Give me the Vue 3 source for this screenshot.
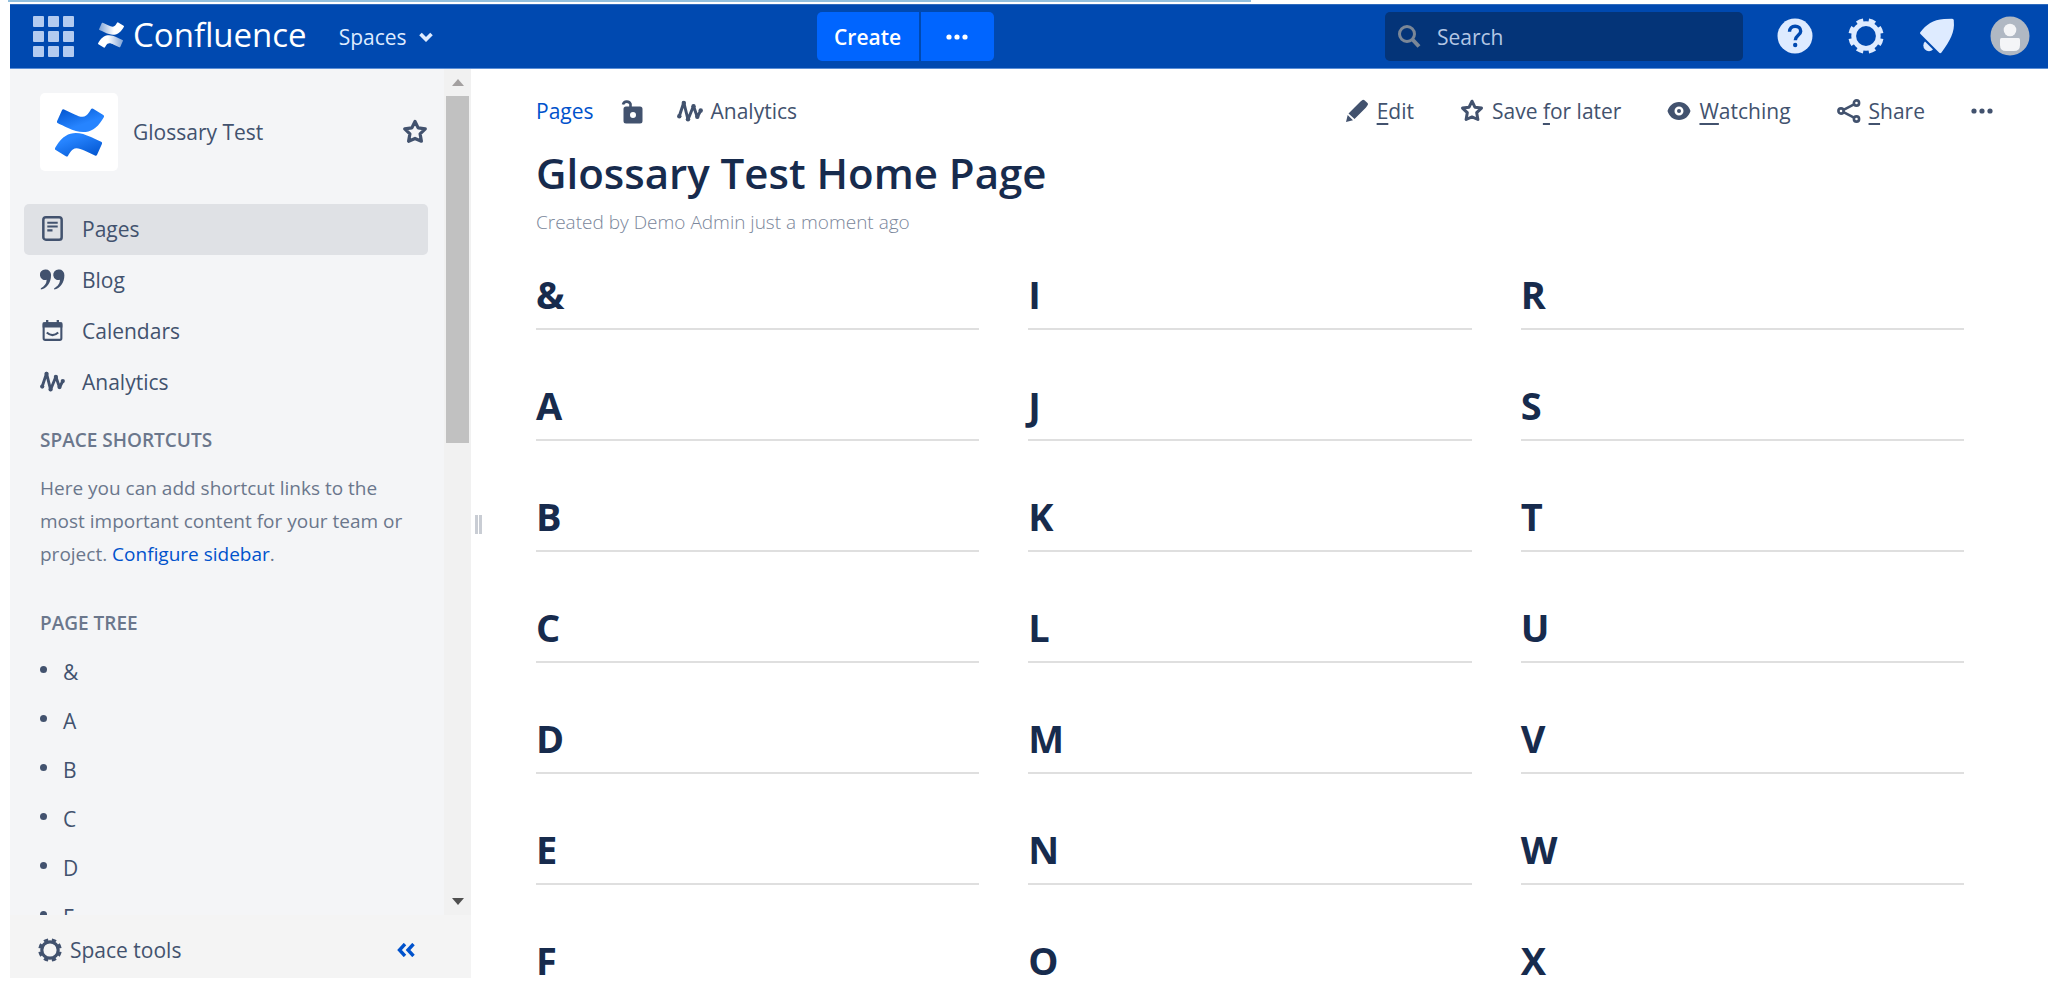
<script setup>
import { ref } from "vue";
const query = ref("");
const pages = ["&", "A", "B", "C", "D", "E"];
const columns = [
  ["&", "A", "B", "C", "D", "E", "F"],
  ["I", "J", "K", "L", "M", "N", "O"],
  ["R", "S", "T", "U", "V", "W", "X"],
];
const links = [
  { name: "Pages", icon: "pages" },
  { name: "Blog", icon: "blog" },
  { name: "Calendars", icon: "calendar" },
  { name: "Analytics", icon: "analytics" },
];
const active = ref("Pages");
</script>

<template>
  <svg class="sprite" aria-hidden="true">
    <symbol id="gear" viewBox="0 0 24 24">
      <g fill="none" stroke="currentColor">
        <circle cx="12" cy="12" r="8.2" stroke-width="3.2" />
        <circle
          cx="12"
          cy="12"
          r="10.3"
          stroke-width="3"
          pathLength="80"
          stroke-dasharray="5.4 4.6"
          stroke-dashoffset="-2.3"
        />
      </g>
    </symbol>
    <symbol id="star" viewBox="0 0 24 24">
      <path
        d="M12 2.2l2.9 6 6.6.9-4.8 4.6 1.2 6.8-5.9-2.6-5.900 2.600 1.200-6.800L2.500 9.100l6.600-.9z"
        fill="none"
        stroke="currentColor"
        stroke-width="3"
        stroke-linejoin="round"
      />
    </symbol>
    <symbol id="analytics" viewBox="0 0 26 22">
      <path
        d="M2.2 16.5L6.8 2.5 11 19.5 16.5 6 20.3 17 23.8 10.5"
        fill="none"
        stroke="currentColor"
        stroke-width="3"
        stroke-linejoin="round"
      />
      <g fill="currentColor">
        <circle cx="2.3" cy="16.3" r="2.2" />
        <circle cx="6.8" cy="3" r="2.2" />
        <circle cx="11" cy="19.3" r="2.2" />
        <circle cx="16.5" cy="6.2" r="2.2" />
        <circle cx="20.3" cy="16.8" r="2.2" />
        <circle cx="23.7" cy="10.5" r="2.2" />
      </g>
    </symbol>
    <symbol id="pages" viewBox="0 0 24 24">
      <rect x="3.2" y="1.2" width="17.6" height="21.6" rx="2.5" fill="none" stroke="currentColor" stroke-width="2.4" />
      <path d="M7 6.5h10M7 10h10M7 13.8h5" stroke="currentColor" stroke-width="2" />
    </symbol>
    <symbol id="blog" viewBox="0 0 24 24">
      <path
        d="M5 2.5a5 5 0 0 1 5.6 5.3C10.6 15 6.5 20.3.8 21.7V20.5C4.2 18.6 6.5 15.7 6.3 12.3A5 5 0 1 1 5 2.5z"
        fill="currentColor"
      />
      <path
        d="M17.8 2.5a5 5 0 0 1 5.6 5.3C23.4 15 19.3 20.3 13.6 21.7V20.5C17 18.6 19.3 15.7 19.1 12.3A5 5 0 1 1 17.8 2.5z"
        fill="currentColor"
      />
    </symbol>
    <symbol id="calendar" viewBox="0 0 24 24">
      <rect x="3.5" y="5" width="17" height="16" rx="1.5" fill="none" stroke="currentColor" stroke-width="2" />
      <path d="M2.5 5q0-1 1-1h17q1 0 1 1v4h-19zM5.8 2h2.2v3H5.8zM16 2h2.2v3H16z" fill="currentColor" />
      <path d="M6.500 14q5.500 5 11 0" fill="none" stroke="currentColor" stroke-width="2" />
    </symbol>
    <symbol id="confluence" viewBox="0 0 24 24">
      <path
        class="upper"
        d="M23.131 5.743c.249-.405.531-.875.764-1.25a.764.764 0 0 0-.256-1.034L18.675.404a.764.764 0 0 0-1.058.26c-.195.335-.451.763-.734 1.225-1.966 3.246-3.945 2.85-7.508 1.146L4.437.694a.764.764 0 0 0-1.027.382L1.046 6.422a.764.764 0 0 0 .382 1c1.039.49 3.105 1.467 4.965 2.361 6.698 3.246 12.392 3.029 16.738-4.04z"
      />
      <path
        class="lower"
        d="M.87 18.257c-.248.382-.53.875-.763 1.245a.764.764 0 0 0 .255 1.04l4.965 3.054a.764.764 0 0 0 1.058-.26c.199-.332.454-.763.733-1.221 1.967-3.247 3.945-2.853 7.508-1.146l4.957 2.337a.764.764 0 0 0 1.028-.382l2.364-5.346a.764.764 0 0 0-.382-1 599.851 599.851 0 0 1-4.965-2.361C10.911 10.97 5.224 11.185.87 18.257z"
      />
    </symbol>
    <symbol id="dots" viewBox="0 0 22 6">
      <g fill="currentColor">
        <circle cx="3" cy="3" r="2.6" />
        <circle cx="11" cy="3" r="2.6" />
        <circle cx="19" cy="3" r="2.6" />
      </g>
    </symbol>
  </svg>

  <div class="app">
    <div class="progress"></div>
    <header>
      <button class="plain switcher" aria-label="Applications">
        <span v-for="n in 9" :key="n"></span>
      </button>
      <a href="#" class="brand">
        <svg width="26" height="26" viewBox="0 0 24 24">
          <defs>
            <linearGradient id="white-up">
              <stop offset="0" stop-color="#fff" stop-opacity=".5" />
              <stop offset=".6" stop-color="#fff" />
            </linearGradient>
            <linearGradient id="white-down">
              <stop offset=".4" stop-color="#fff" />
              <stop offset="1" stop-color="#fff" stop-opacity=".5" />
            </linearGradient>
          </defs>
          <use href="#confluence" class="logo-white" />
        </svg>
        Confluence
      </a>
      <button class="plain spaces">
        Spaces
        <svg width="14" height="10" viewBox="0 0 14 10">
          <path d="M1.5 2l5.500 5.500L12.500 2" fill="none" stroke="currentColor" stroke-width="3.6" />
        </svg>
      </button>
      <div class="create">
        <button>Create</button>
        <button aria-label="Create from template">
          <svg width="22" height="6"><use href="#dots" /></svg>
        </button>
      </div>
      <label class="search">
        <svg width="24" height="24" viewBox="0 0 24 24">
          <g fill="none" stroke="#7b8797" stroke-width="3">
            <circle cx="10" cy="9" r="7.5" />
            <path d="M15 14l7 7.500" stroke-width="4" />
          </g>
        </svg>
        <input v-model="query" type="text" placeholder="Search" aria-label="Search" />
      </label>
      <button class="plain tool" aria-label="Help">
        <svg width="36" height="36" viewBox="0 0 36 36">
          <circle cx="18" cy="18" r="17.5" fill="#deebff" />
          <path
            d="M12.5 13.800c0-3.500 2.300-5.600 5.600-5.600s5.600 2 5.600 5c0 4-5.400 4.300-5.400 9"
            fill="none"
            stroke="#0049b0"
            stroke-width="3.4"
          />
          <circle cx="18.200" cy="27" r="2.200" fill="#0049b0" />
        </svg>
      </button>
      <button class="plain tool" aria-label="Settings">
        <svg width="36" height="36"><use href="#gear" /></svg>
      </button>
      <button class="plain tool" aria-label="Notifications">
        <svg width="36" height="36" viewBox="0 0 36 36">
          <path
            d="M1.500 14C7 7 14 1.500 25 1L33 .8c1.500 0 2 1 1.800 2.500C36 14 31 23 22.500 34.500c-.8 1-1.800 1-2.500 0L1.500 16c-.6-.6-.6-1.300 0-2z"
            fill="#deebff"
          />
          <path d="M6 23.500l8 8A5 5 0 0 1 6 23.500z" fill="#deebff" />
        </svg>
      </button>
      <button class="plain tool" aria-label="Profile">
        <svg width="40" height="40" viewBox="0 0 40 40">
          <circle cx="20" cy="20" r="19.500" fill="#b0b8c3" />
          <circle cx="20" cy="14" r="6.300" fill="#f4f5f7" />
          <path d="M10 23.500a1.500 1.500 0 0 1 1.500-1.500h17a1.500 1.500 0 0 1 1.500 1.500V29q0 6-6 6h-8q-6 0-6-6z" fill="#f4f5f7" />
        </svg>
      </button>
    </header>

    <div class="body">
      <aside>
        <div class="scroller">
          <div class="panel">
            <div class="space">
              <a href="#" class="space-logo" aria-label="Space home">
                <svg width="49" height="49" viewBox="0 0 24 24">
                  <defs>
                    <linearGradient id="blue-up" x1="0" y1="0" x2=".5" y2=".7">
                      <stop offset="0" stop-color="#0052cc" />
                      <stop offset="1" stop-color="#2684ff" />
                    </linearGradient>
                    <linearGradient id="blue-down" x1="1" y1="1" x2=".4" y2=".2">
                      <stop offset="0" stop-color="#0052cc" />
                      <stop offset="1" stop-color="#2684ff" />
                    </linearGradient>
                  </defs>
                  <use href="#confluence" class="logo-blue" />
                </svg>
              </a>
              <a href="#" class="space-name">Glossary Test</a>
              <button class="plain" aria-label="Add to my spaces">
                <svg width="26" height="26"><use href="#star" /></svg>
              </button>
            </div>
            <nav>
              <a
                v-for="link in links"
                :key="link.name"
                href="#"
                :class="{ active: active === link.name }"
                @click.prevent="active = link.name"
              >
                <svg width="25" height="25"><use :href="'#' + link.icon" /></svg>
                {{ link.name }}
              </a>
            </nav>
            <h5>SPACE SHORTCUTS</h5>
            <p>
              Here you can add shortcut links to the most important content for
              your team or project. <a href="#">Configure sidebar</a>.
            </p>
            <h5>PAGE TREE</h5>
            <ul>
              <li v-for="page in pages" :key="page">
                <a href="#">{{ page }}</a>
              </li>
            </ul>
          </div>
          <div class="scrollbar">
            <svg width="12" height="7" viewBox="0 0 12 7"><path d="M0 7l6-7 6 7z" fill="#a3a0a0" /></svg>
            <div class="thumb"></div>
            <div class="flex-1"></div>
            <svg width="12" height="7" viewBox="0 0 12 7"><path d="M0 0l6 7 6-7z" fill="#505050" /></svg>
          </div>
        </div>
        <footer>
          <button class="plain">
            <svg width="24" height="24"><use href="#gear" /></svg>
            Space tools
          </button>
          <button class="plain collapse" aria-label="Collapse sidebar">
            <svg width="18" height="14" viewBox="0 0 18 14">
              <path
                d="M8 1L2.500 7 8 13M16.500 1L11 7l5.500 6"
                fill="none"
                stroke="#0052cc"
                stroke-width="3.4"
              />
            </svg>
          </button>
        </footer>
      </aside>
      <div class="handle"><span></span><span></span></div>

      <main>
        <div class="toolbar">
          <a href="#" class="crumb">Pages</a>
          <button class="plain lock" aria-label="Restrictions">
            <svg width="22" height="26" viewBox="0 0 22 26">
              <path d="M2 6.500a4 4 0 0 1 7.500-.5V11" fill="none" stroke="currentColor" stroke-width="2.600" />
              <path
                d="M5 8.500h14a2.500 2.500 0 0 1 2.500 2.500v12a2.500 2.500 0 0 1-2.500 2.500H5A2.500 2.500 0 0 1 2.500 23V11A2.500 2.500 0 0 1 5 8.500zM12 14a3 3 0 1 0 0 6 3 3 0 0 0 0-6z"
                fill="currentColor"
                fill-rule="evenodd"
              />
            </svg>
          </button>
          <button class="plain">
            <svg width="26" height="22"><use href="#analytics" /></svg>
            <span>Analytics</span>
          </button>
          <div class="actions">
            <button class="plain">
              <svg width="24" height="24" viewBox="0 0 24 24">
                <path
                  d="M15.500 2.500l2-1.500q1-.7 2 .2l3 2.900q1 1 .2 2L21 8.500 9.500 20 3.500 14.500zM2.700 16l5.300 5.200L1 23z"
                  fill="currentColor"
                />
              </svg>
              <span><u>E</u>dit</span>
            </button>
            <button class="plain">
              <svg width="24" height="24"><use href="#star" /></svg>
              <span>Save <u>f</u>or later</span>
            </button>
            <button class="plain">
              <svg width="24" height="24" viewBox="0 0 24 24">
                <path
                  d="M12 3C6 3 2 7 .5 12 2 17 6 21 12 21s10-4 11.500-9C22 7 18 3 12 3zm0 4.500a4.500 4.500 0 1 1 0 9 4.500 4.500 0 0 1 0-9z"
                  fill="currentColor"
                  fill-rule="evenodd"
                />
                <circle cx="12" cy="12" r="2" fill="currentColor" />
              </svg>
              <span><u>W</u>atching</span>
            </button>
            <button class="plain">
              <svg width="24" height="24" viewBox="0 0 24 24">
                <g fill="none" stroke="currentColor" stroke-width="2.600">
                  <circle cx="4" cy="12" r="2.600" />
                  <circle cx="19.500" cy="4" r="2.600" />
                  <circle cx="19.500" cy="20" r="2.600" />
                  <path d="M6.500 10.800l10.500-5.500M6.500 13.200l10.500 5.500" />
                </g>
              </svg>
              <span><u>S</u>hare</span>
            </button>
            <button class="plain" aria-label="More actions">
              <svg width="22" height="6"><use href="#dots" /></svg>
            </button>
          </div>
        </div>
        <h1>Glossary Test Home Page</h1>
        <div class="byline">Created by Demo Admin just a moment ago</div>
        <div class="glossary">
          <section v-for="(column, i) in columns" :key="i">
            <h2 v-for="letter in column" :key="letter">{{ letter }}</h2>
          </section>
        </div>
      </main>
    </div>
  </div>
</template>

<style>
body {
  margin: 0;
  background: #fff;
}
</style>

<style scoped>
* {
  box-sizing: border-box;
}
.sprite {
  display: none;
}
.app {
  display: flex;
  flex-direction: column;
  height: 100vh;
  overflow: hidden;
  padding: 0 0 13px 10px;
  font-family: "Open Sans", "Noto Sans", sans-serif;
  font-size: 21px;
  color: #42526e;
}
svg {
  display: block;
  flex: none;
}
a {
  color: inherit;
  text-decoration: none;
}
.plain {
  display: flex;
  align-items: center;
  gap: 8px;
  padding: 0;
  border: none;
  background: none;
  font: inherit;
  color: inherit;
  cursor: pointer;
}
.flex-1 {
  flex: 1;
}
.progress {
  flex: none;
  width: 61%;
  height: 2px;
  margin: 0 0 2px -2px;
  background: #92bfdd;
}
header {
  display: flex;
  align-items: center;
  flex: none;
  height: 65px;
  padding: 0 18px 0 23px;
  background: #0049b0;
  border-top: 1px solid #2f6bbd;
  border-bottom: 1px solid #5c8fd6;
  color: #deebff;
}
.switcher {
  display: grid;
  grid-template-columns: repeat(3, 11px);
  gap: 4px;
}
.switcher span {
  height: 11px;
  background: #b3cbf0;
  border-radius: 1px;
}
.brand {
  display: flex;
  align-items: center;
  gap: 9px;
  margin-left: 24px;
  padding-bottom: 3px;
  font-size: 33px;
  line-height: 40px;
  color: #fff;
}
.logo-white {
  --up: url(#white-up);
  --down: url(#white-down);
}
.logo-blue {
  --up: url(#blue-up);
  --down: url(#blue-down);
}
.upper {
  fill: var(--up);
}
.lower {
  fill: var(--down);
}
.spaces {
  gap: 12px;
  margin-left: 32px;
}
.create {
  display: flex;
  gap: 2px;
  margin: 0 auto 0 384px;
}
.create button {
  display: flex;
  align-items: center;
  justify-content: center;
  width: 102px;
  height: 49px;
  padding: 0;
  border: none;
  border-radius: 5px 0 0 5px;
  background: #0065ff;
  font: inherit;
  font-weight: 600;
  color: #fff;
  cursor: pointer;
}
.create button:last-child {
  width: 73px;
  border-radius: 0 5px 5px 0;
}
.search {
  display: flex;
  align-items: center;
  gap: 16px;
  width: 358px;
  height: 49px;
  margin-right: 34px;
  padding: 0 12px;
  border-radius: 5px;
  background: #043478;
}
.search input {
  flex: 1;
  min-width: 0;
  padding: 0;
  border: none;
  outline: none;
  background: none;
  font: inherit;
  color: #b3c6e4;
}
.search input::placeholder {
  color: #b3c6e4;
  opacity: 1;
}
.tool {
  padding-bottom: 2px;
}
.tool + .tool {
  margin-left: 35px;
}
.body {
  display: flex;
  flex: 1;
  min-height: 0;
}
aside {
  display: flex;
  flex-direction: column;
  flex: none;
  width: 461px;
  background: #f4f5f7;
}
.scroller {
  display: flex;
  flex: 1;
  min-height: 0;
}
.panel {
  flex: 1;
  overflow: hidden;
  padding: 24px 16px 0 14px;
}
.space {
  display: flex;
  align-items: center;
  padding-left: 16px;
  margin-bottom: 33px;
}
.space-logo {
  display: flex;
  align-items: center;
  justify-content: center;
  width: 78px;
  height: 78px;
  border-radius: 5px;
  background: #fff;
}
.space-name {
  flex: 1;
  margin-left: 15px;
}
nav a {
  display: flex;
  align-items: center;
  gap: 17px;
  height: 51px;
  padding: 0 0 2px 16px;
  border-radius: 5px;
}
nav a.active {
  background: #dfe1e5;
}
h5 {
  margin: 20px 0 0 16px;
  font-size: 19px;
  line-height: 24px;
  font-weight: 600;
  color: #6b778c;
}
p {
  margin: 20px 20px 40px 16px;
  font-size: 19px;
  line-height: 33px;
  color: #6b778c;
}
p a {
  color: #0052cc;
}
ul {
  margin: 12px 0 0;
  padding: 0 0 0 39px;
  list-style: none;
}
li {
  display: flex;
  align-items: center;
  height: 49px;
}
li::before {
  content: "";
  width: 7px;
  height: 7px;
  margin: 0 16px 4px -23px;
  border-radius: 50%;
  background: #42526e;
}
.scrollbar {
  display: flex;
  flex-direction: column;
  align-items: center;
  width: 27px;
  padding: 10px 0;
  background: #f1f1f1;
}
.thumb {
  width: 23px;
  height: 42%;
  margin-top: 10px;
  background: #c1c1c1;
}
footer {
  display: flex;
  align-items: center;
  justify-content: space-between;
  height: 63px;
  padding: 7px 56px 0 28px;
  background: #f4f4f4;
}
.handle {
  display: flex;
  align-items: flex-start;
  gap: 1px;
  width: 12px;
  margin: 446px 0 0 4px;
}
.handle span {
  width: 3px;
  height: 19px;
  background: #c9cdd4;
}
main {
  flex: 1;
  min-width: 0;
  padding: 23px 55px 0 49px;
}
.toolbar {
  display: flex;
  align-items: center;
  height: 38px;
}
.crumb {
  color: #0052cc;
}
.lock {
  margin: 0 34px 0 27px;
}
.actions {
  display: flex;
  gap: 46px;
  margin-left: auto;
}
u {
  text-decoration-thickness: 2px;
  text-underline-offset: 4px;
}
h1 {
  margin: 13px 0 0;
  font-size: 42px;
  line-height: 60px;
  font-weight: 600;
  color: #172b4d;
}
.byline {
  margin-top: 4px;
  font-size: 19px;
  line-height: 30px;
  font-weight: 300;
  color: #7a869a;
}
.glossary {
  display: grid;
  grid-template-columns: repeat(3, 1fr);
  gap: 49px;
  margin: 33px 29px 0 0;
}
h2 {
  height: 60px;
  margin: 0 0 51px;
  border-bottom: 2px solid #dfdfdf;
  font-size: 38px;
  line-height: 48px;
  font-weight: 700;
  color: #172b4d;
}
</style>
